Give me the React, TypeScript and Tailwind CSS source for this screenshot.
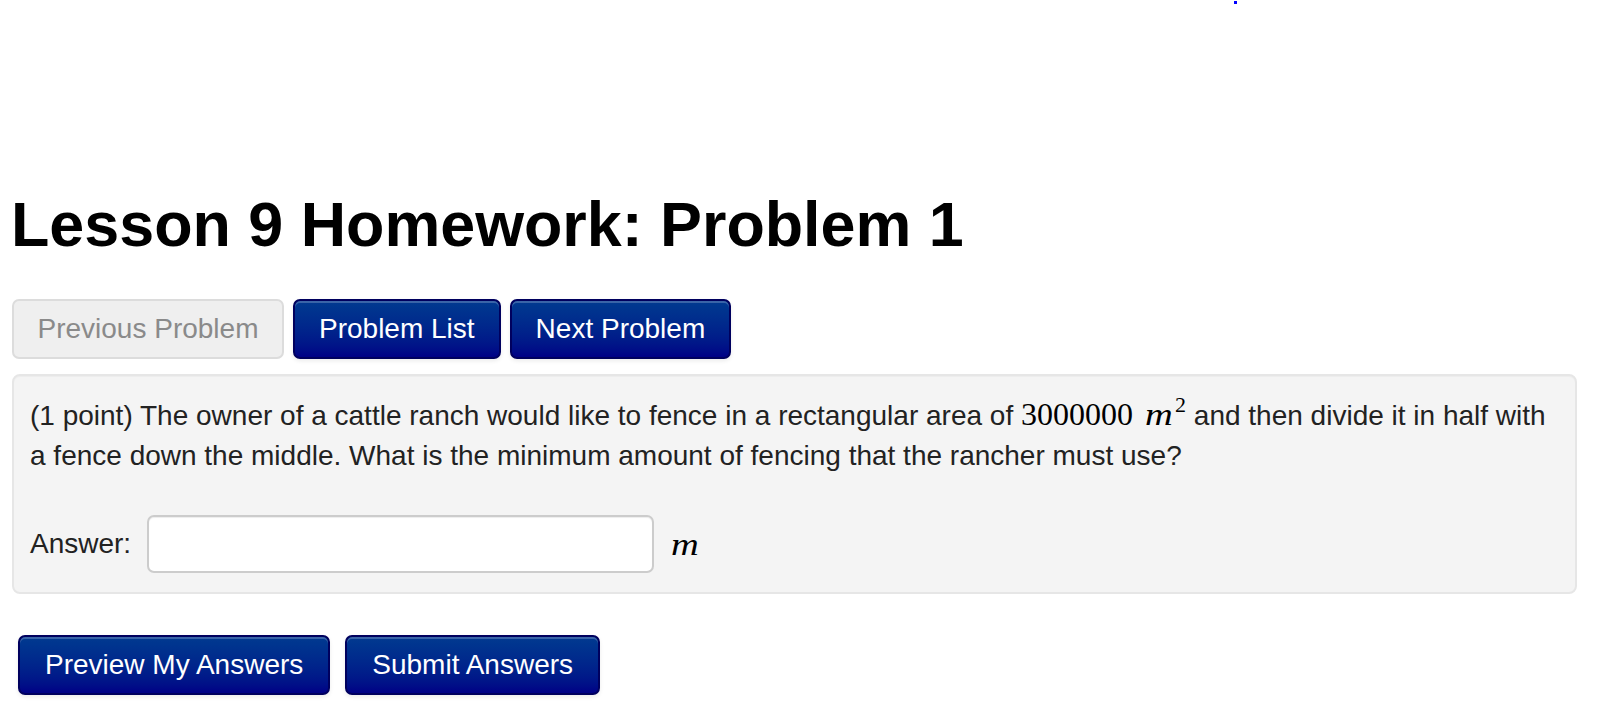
import React from "react";

const sans = { fontFamily: '"Liberation Sans", Arial, sans-serif' };

function PrimaryButton({ children, px = "px-[24px]" }: { children: React.ReactNode; px?: string }) {
  return (
    <button
      type="button"
      className={
        "rounded-[7px] border-2 border-[#00005e] bg-linear-to-b from-[#033a90] to-[#000086] py-[8px] text-[28px] leading-[40px] text-white shadow-[inset_0_2px_0_rgba(255,255,255,0.22),0_2px_4px_rgba(0,0,0,0.08)] " +
        px
      }
    >
      {children}
    </button>
  );
}

export default function App() {
  return (
    <div className="relative min-h-[716px] bg-white text-[#222]" style={sans}>
      <div className="absolute left-[1234px] top-[1px] h-[3px] w-[3px] bg-[#0000ff]" />
      <div className="pl-[12px] pr-[40px] pt-[184px] pb-[22px]">
        <h1 className="-ml-[1px] text-[62.8px] font-bold leading-[80px] text-black">
          Lesson 9 Homework: Problem 1
        </h1>

        <div className="mt-[35px] flex gap-[9px]">
          <button
            type="button"
            disabled
            className="rounded-[7px] border-2 border-[#dcdcdc] bg-[#efefef] px-[23.5px] py-[8px] text-[28px] leading-[40px] text-[#8a8a8a]"
          >
            Previous Problem
          </button>
          <PrimaryButton px="px-[24px]">Problem List</PrimaryButton>
          <PrimaryButton px="px-[24px]">Next Problem</PrimaryButton>
        </div>

        <div className="mt-[15px] rounded-[8px] border-2 border-[#e6e6e6] bg-[#f4f4f4] pl-[16px] pr-[16px] pt-[20px] pb-[19px] shadow-[inset_0_1px_1px_rgba(0,0,0,0.03)]">
          <p className="text-[28px] leading-[40px]">
            (1 point) The owner of a cattle ranch would like to fence in a rectangular area of{" "}
            <span
              className="leading-none text-black"
              style={{ fontFamily: '"Liberation Serif", "Times New Roman", serif', fontSize: "32px" }}
            >
              3000000
              <span className="ml-[12px] inline-block origin-left scale-x-[1.2] italic">m</span>
              <span className="relative -top-[13px] ml-[7px] text-[22px]">2</span>
            </span>{" "}
            and then divide it in half with
            <br />
            a fence down the middle. What is the minimum amount of fencing that the rancher must use?
          </p>

          <div className="mt-[39px] flex items-center">
            <span className="text-[28px] leading-[40px]">Answer:</span>
            <input
              type="text"
              aria-label="Answer"
              className="ml-[16px] h-[58px] w-[507px] rounded-[7px] border-2 border-[#cccccc] bg-white px-[12px] text-[28px] shadow-[inset_0_1px_1px_rgba(0,0,0,0.075)] outline-none"
            />
            <span
              className="ml-[17px] inline-block origin-left scale-x-[1.2] italic leading-none text-black"
              style={{ fontFamily: '"Liberation Serif", "Times New Roman", serif', fontSize: "32px" }}
            >
              m
            </span>
          </div>
        </div>

        <div className="mt-[41px] ml-[6px] flex gap-[15px]">
          <PrimaryButton px="px-[25px]">Preview My Answers</PrimaryButton>
          <PrimaryButton px="px-[25px]">Submit Answers</PrimaryButton>
        </div>
      </div>
    </div>
  );
}
